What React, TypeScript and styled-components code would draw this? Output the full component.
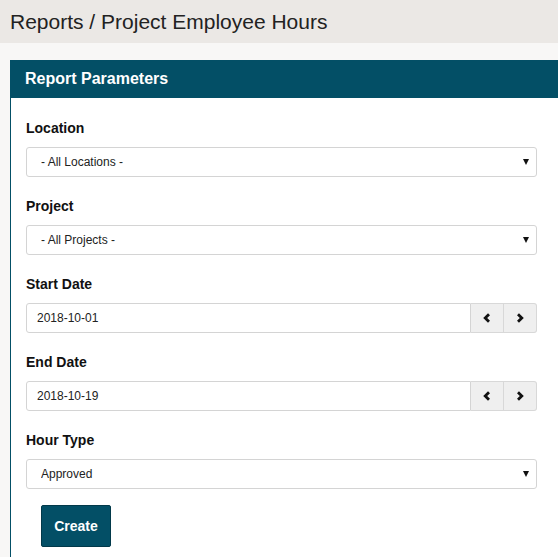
import styled, { createGlobalStyle } from "styled-components";

const GlobalStyle = createGlobalStyle`
  html, body {
    margin: 0;
    padding: 0;
    background-color: #f8f7f6;
    font-family: "Liberation Sans", Arial, sans-serif;
    color: #333;
  }
  * {
    box-sizing: border-box;
  }
`;

const TEAL = "#034f66";

const PageHeader = styled.header`
  height: 43px;
  background-color: #ebe8e5;
  display: flex;
  align-items: center;
  padding-left: 10px;

  h1 {
    margin: 0;
    font-size: 21px;
    font-weight: normal;
    color: #222;
  }
`;

const Content = styled.main`
  padding: 17px 0 0 10px;
`;

const Panel = styled.section`
  background-color: #fff;
  border-left: 1px solid ${TEAL};
  min-height: 500px;
`;

const PanelHeading = styled.div`
  height: 38px;
  background-color: ${TEAL};
  display: flex;
  align-items: center;
  padding-left: 15px;
  margin-left: -1px;
  color: #fff;
  font-size: 16px;
  font-weight: bold;
`;

const PanelBody = styled.div`
  padding: 20px 21px 12px 15px;
`;

const Field = styled.div`
  margin-bottom: 19px;
`;

const Label = styled.label`
  display: block;
  font-size: 14px;
  line-height: 20px;
  font-weight: bold;
  color: #111;
  margin-bottom: 9px;
`;

const SelectWrap = styled.div`
  position: relative;

  &::after {
    content: "";
    position: absolute;
    right: 8px;
    top: 12px;
    border-left: 3.5px solid transparent;
    border-right: 3.5px solid transparent;
    border-top: 6px solid #111;
    pointer-events: none;
  }
`;

const Select = styled.select`
  appearance: none;
  width: 100%;
  height: 30px;
  padding: 0 12px 0 14px;
  border: 1px solid #d4d4d4;
  border-radius: 3px;
  background-color: #fff;
  font-family: inherit;
  font-size: 12px;
  color: #222;
`;

const DateRow = styled.div`
  display: flex;
  height: 30px;
`;

const DateInput = styled.input`
  flex: 1;
  min-width: 0;
  height: 100%;
  padding: 0 10px;
  border: 1px solid #d4d4d4;
  border-radius: 3px 0 0 3px;
  font-family: inherit;
  font-size: 12px;
  color: #222;
`;

const NavButton = styled.button<{ $last?: boolean }>`
  width: 33px;
  height: 100%;
  display: flex;
  align-items: center;
  justify-content: center;
  padding: 0;
  background-color: #efefef;
  border: 1px solid #d8d8d8;
  border-left: none;
  border-radius: ${(p) => (p.$last ? "0 3px 3px 0" : "0")};
  cursor: pointer;
`;

const CreateButton = styled.button`
  margin: -3px 0 0 15px;
  width: 70px;
  height: 42px;
  background-color: ${TEAL};
  border: 1px solid #02394a;
  border-radius: 2px;
  color: #fff;
  font-family: inherit;
  font-size: 14px;
  font-weight: bold;
  cursor: pointer;
`;

const Chevron = ({ dir }: { dir: "left" | "right" }) => (
  <svg width="8" height="10" viewBox="0 0 8 10">
    <path
      d={dir === "left" ? "M6 1.2 L2.2 5 L6 8.8" : "M2 1.2 L5.8 5 L2 8.8"}
      fill="none"
      stroke="#111"
      strokeWidth="2.8"
    />
  </svg>
);

function SelectField({ label, value }: { label: string; value: string }) {
  return (
    <Field>
      <Label>{label}</Label>
      <SelectWrap>
        <Select defaultValue={value}>
          <option>{value}</option>
        </Select>
      </SelectWrap>
    </Field>
  );
}

function DateField({ label, value }: { label: string; value: string }) {
  return (
    <Field>
      <Label>{label}</Label>
      <DateRow>
        <DateInput defaultValue={value} />
        <NavButton>
          <Chevron dir="left" />
        </NavButton>
        <NavButton $last>
          <Chevron dir="right" />
        </NavButton>
      </DateRow>
    </Field>
  );
}

export default function App() {
  return (
    <>
      <GlobalStyle />
      <PageHeader>
        <h1>Reports / Project Employee Hours</h1>
      </PageHeader>
      <Content>
        <Panel>
          <PanelHeading>Report Parameters</PanelHeading>
          <PanelBody>
            <SelectField label="Location" value="- All Locations -" />
            <SelectField label="Project" value="- All Projects -" />
            <DateField label="Start Date" value="2018-10-01" />
            <DateField label="End Date" value="2018-10-19" />
            <SelectField label="Hour Type" value="Approved" />
            <CreateButton>Create</CreateButton>
          </PanelBody>
        </Panel>
      </Content>
    </>
  );
}
